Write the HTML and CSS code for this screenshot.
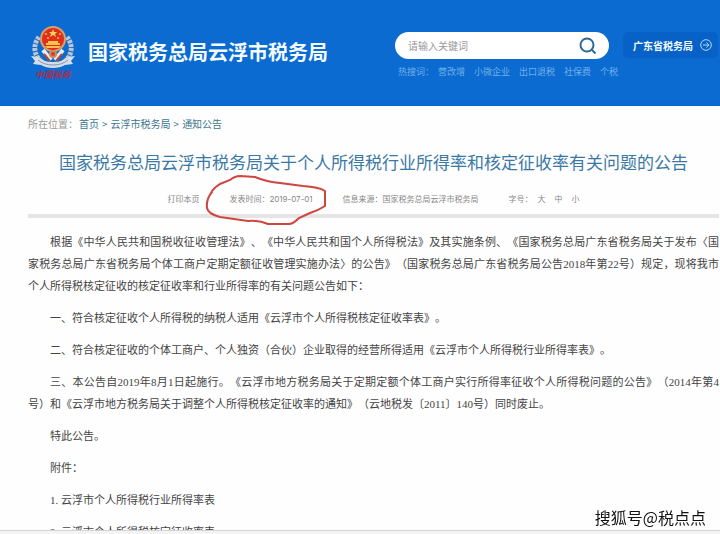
FILE: index.html
```
<!DOCTYPE html>
<html lang="zh-CN">
<head>
    <meta charset="UTF-8">
    <meta name="viewport" content="width=device-width, initial-scale=1.0">
    <title>国家税务总局云浮市税务局</title>
    <link rel="stylesheet" href="styles.css">
</head>
<body>
    <header class="header">
        <svg class="emblem" viewBox="0 0 46 56" aria-hidden="true">
            <!-- wheat wreath -->
            <path d="M9 13C2 22 4 33 14 39M37 13c7 9 5 20-5 26" fill="none" stroke="#b9c6d6" stroke-width="5" stroke-dasharray="3 1"/>
            <path d="M11 15C5 23 7 32 15 37M35 15c6 8 4 17-4 22" fill="none" stroke="#56677c" stroke-width="1" stroke-dasharray="2 2"/>
            <path d="M13 26l8 10M33 26l-8 10" stroke="#e8edf2" stroke-width="4"/>
            <path d="M14 30l6 7M32 30l-6 7" stroke="#b14a3c" stroke-width="2"/>
            <!-- national emblem -->
            <circle cx="23" cy="15" r="13" fill="#d8a06a"/>
            <circle cx="23" cy="15" r="11" fill="#e0301c"/>
            <path d="M23 5l1 3h3l-2 2 1 3-3-2-3 2 1-3-2-2h3z" fill="#ffd25e"/>
            <g fill="#ffc04e">
                <circle cx="16" cy="10" r="1"/>
                <circle cx="30" cy="10" r="1"/>
                <circle cx="18" cy="14" r="1"/>
                <circle cx="28" cy="14" r="1"/>
                <path d="M18 17h10v2h2v2H16v-2h2zM15 22h16l-2 2H17z"/>
            </g>
            <circle cx="23" cy="30" r="4" fill="#c98a5c"/>
            <circle cx="23" cy="30" r="2" fill="#d8402a"/>
            <!-- ribbon -->
            <path d="M1 32l8 1q3 5 14 5t14-5l8-1-4 5 2 3-8 1q-5 3-12 3t-12-3l-8-1 2-3z" fill="#d5dde6"/>
            <path d="M8 36q6 5 15 5t15-5" fill="none" stroke="#8496aa" stroke-width="1"/>
            <text x="23" y="54" class="emblem-text">中国税务</text>
        </svg>
        <div class="site-name">国家税务总局云浮市税务局</div>
        <div class="search">
            <form class="search-box">
                <input type="text" aria-label="搜索" placeholder="请输入关键词">
                <button type="button" class="search-btn" aria-label="搜索">
                    <svg viewBox="0 0 18 18" width="18" height="18">
                        <circle cx="8" cy="8" r="6.5"/>
                        <path d="M12.5 12.5l4 4"/>
                    </svg>
                </button>
            </form>
            <div class="hot-words">
                <span>热搜词：</span>
                <a href="#">营改增</a>
                <a href="#">小微企业</a>
                <a href="#">出口退税</a>
                <a href="#">社保费</a>
                <a href="#">个税</a>
            </div>
        </div>
        <a href="#" class="province">
            广东省税务局
            <svg viewBox="0 0 12 12" width="12" height="12">
                <circle cx="6" cy="6" r="5.3"/>
                <path d="M3 6h6M6.5 3.5L9 6 6.5 8.5"/>
            </svg>
        </a>
    </header>

    <main class="content">
        <nav class="breadcrumb">
            <span class="label">所在位置：</span>
            <a href="#">首页</a>
            <span>&gt;</span>
            <a href="#">云浮市税务局</a>
            <span>&gt;</span>
            <a href="#">通知公告</a>
        </nav>

        <h1>国家税务总局云浮市税务局关于个人所得税行业所得率和核定征收率有关问题的公告</h1>

        <div class="meta">
            <a href="#">打印本页</a>
            <span class="date">
                发表时间：2019-07-01
                <svg class="mark" viewBox="0 0 126 54" width="126" height="54" aria-hidden="true">
                    <path d="M8 20C10 15 14 13 17 11L27 7Q32 3 37 3L52 4Q64 9 77 10L100 13Q116 14 122 18L122 33Q116 37 107 40L96 45Q90 51 86 51L65 51Q56 47 45 48L17 44Q5 41 4 35Q3 26 9 19"/>
                </svg>
            </span>
            <span>信息来源：国家税务总局云浮市税务局</span>
            <span class="font-size">字号：
                <a href="#">大</a>
                <a href="#">中</a>
                <a href="#">小</a>
            </span>
        </div>

        <article class="article">
            <p>根据《中华人民共和国税收征收管理法》、《中华人民共和国个人所得税法》及其实施条例、《国家税务总局广东省税务局关于发布〈国家税务总局广东省税务局个体工商户定期定额征收管理实施办法〉的公告》（国家税务总局广东省税务局公告2018年第22号）规定，现将我市个人所得税核定征收的核定征收率和行业所得率的有关问题公告如下：</p>
            <p>一、符合核定征收个人所得税的纳税人适用《云浮市个人所得税核定征收率表》。</p>
            <p>二、符合核定征收的个体工商户、个人独资（合伙）企业取得的经营所得适用《云浮市个人所得税行业所得率表》。</p>
            <p>三、本公告自2019年8月1日起施行。《云浮市地方税务局关于定期定额个体工商户实行所得率征收个人所得税问题的公告》（2014年第4号）和《云浮市地方税务局关于调整个人所得税核定征收率的通知》（云地税发〔2011〕140号）同时废止。</p>
            <p>特此公告。</p>
            <p>附件：</p>
            <p>1. 云浮市个人所得税行业所得率表</p>
            <p>2. 云浮市个人所得税核定征收率表</p>
        </article>
    </main>

    <footer class="bottom-bar"></footer>
    <div class="watermark">搜狐号@税点点</div>
</body>
</html>
```
FILE: styles.css
```
* {
    box-sizing: border-box;
}

body {
    margin: 0;
    height: 100vh;
    display: flex;
    flex-direction: column;
    overflow: hidden;
    background-color: #fefefe;
    font-family: "Noto Sans CJK SC", sans-serif;
    text-spacing-trim: space-all;
}

a {
    color: inherit;
    text-decoration: none;
}

.header {
    flex: none;
    display: flex;
    align-items: flex-start;
    padding: 24px 2px 24px 30px;
    min-height: 106px;
    background-color: #0b6bd1;
}

.emblem {
    flex: none;
    width: 46px;
    height: 56px;
}

.emblem-text {
    font-size: 9px;
    font-weight: bold;
    font-style: italic;
    text-anchor: middle;
    fill: #a3304f;
}

.site-name {
    flex: 1;
    padding: 13px 0 0 12px;
    font-size: 20px;
    line-height: 30px;
    font-weight: bold;
    color: #f4fbff;
    white-space: nowrap;
}

.search {
    flex: none;
    width: 228px;
    padding-top: 8px;
}

.search-box {
    display: flex;
    align-items: center;
    width: 214px;
    height: 27px;
    padding: 0 12px 0 13px;
    border-radius: 14px;
    background-color: #fff;
}

.search-box input {
    flex: 1;
    min-width: 0;
    padding: 0;
    border: 0;
    outline: 0;
    background: none;
    font-family: inherit;
    font-size: 10px;
}

.search-box input::placeholder {
    color: #999;
}

.search-btn {
    display: flex;
    padding: 0;
    border: 0;
    background: none;
    cursor: pointer;
}

.search-btn svg {
    fill: none;
    stroke: #2d6a97;
    stroke-width: 2;
}

.hot-words {
    display: flex;
    gap: 9px;
    padding: 6px 0 0 3px;
    font-size: 9px;
    line-height: 14px;
    color: #70b0ea;
    white-space: nowrap;
}

.hot-words span {
    margin-right: -5px;
}

.province {
    flex: none;
    display: flex;
    align-items: center;
    justify-content: space-between;
    width: 95px;
    height: 26px;
    margin-top: 8px;
    padding: 0 6px 0 10px;
    border-radius: 5px;
    background-color: #0761c6;
    font-size: 10px;
    font-weight: bold;
    color: #f4fbff;
    white-space: nowrap;
}

.province svg {
    fill: none;
    stroke: #b5d8f6;
    stroke-width: 1;
}

.content {
    flex: 1;
    min-height: 0;
    overflow: hidden;
    padding: 10px 1px 0 28px;
}

.breadcrumb {
    display: flex;
    gap: 3px;
    font-size: 10px;
    line-height: 16px;
    color: #3f7890;
}

.breadcrumb .label {
    margin-right: -2px;
    color: #999;
}

h1 {
    margin: 17px 0 0;
    font-size: 17px;
    line-height: 26px;
    font-weight: normal;
    text-align: center;
    color: #3a79a5;
    white-space: nowrap;
}

.meta {
    display: flex;
    justify-content: center;
    gap: 30px;
    padding: 16px 0 7px;
    border-bottom: 4px solid #e5e5e5;
    font-family: Inter, "Noto Sans CJK SC", sans-serif;
    font-size: 8px;
    line-height: 16px;
    color: #888;
    white-space: nowrap;
}

.date {
    position: relative;
}

/* hand-drawn ring round the publish date */
.mark {
    position: absolute;
    left: -26px;
    top: -18px;
    fill: none;
    stroke: #cf4540;
    stroke-width: 2;
    stroke-linecap: round;
}

.font-size {
    display: flex;
    gap: 9px;
}

.font-size a:first-child {
    margin-left: -4px;
}

.article {
    padding-top: 13px;
    font-family: "Liberation Serif", "Noto Sans CJK SC", serif;
    font-size: 11px;
    line-height: 22px;
    text-align: justify;
    color: #444;
}

.article p {
    margin: 0 0 10px;
    text-indent: 2em;
}

.bottom-bar {
    flex: none;
    height: 4px;
    border-top: 1px solid #d4d4d4;
    background-color: #f4f4f4;
}

.watermark {
    position: fixed;
    right: 14px;
    bottom: 6px;
    font-size: 16px;
    line-height: 22px;
    color: #111;
    text-shadow: 0 0 2px #fff, 1px 1px 0 #fff;
}
```
